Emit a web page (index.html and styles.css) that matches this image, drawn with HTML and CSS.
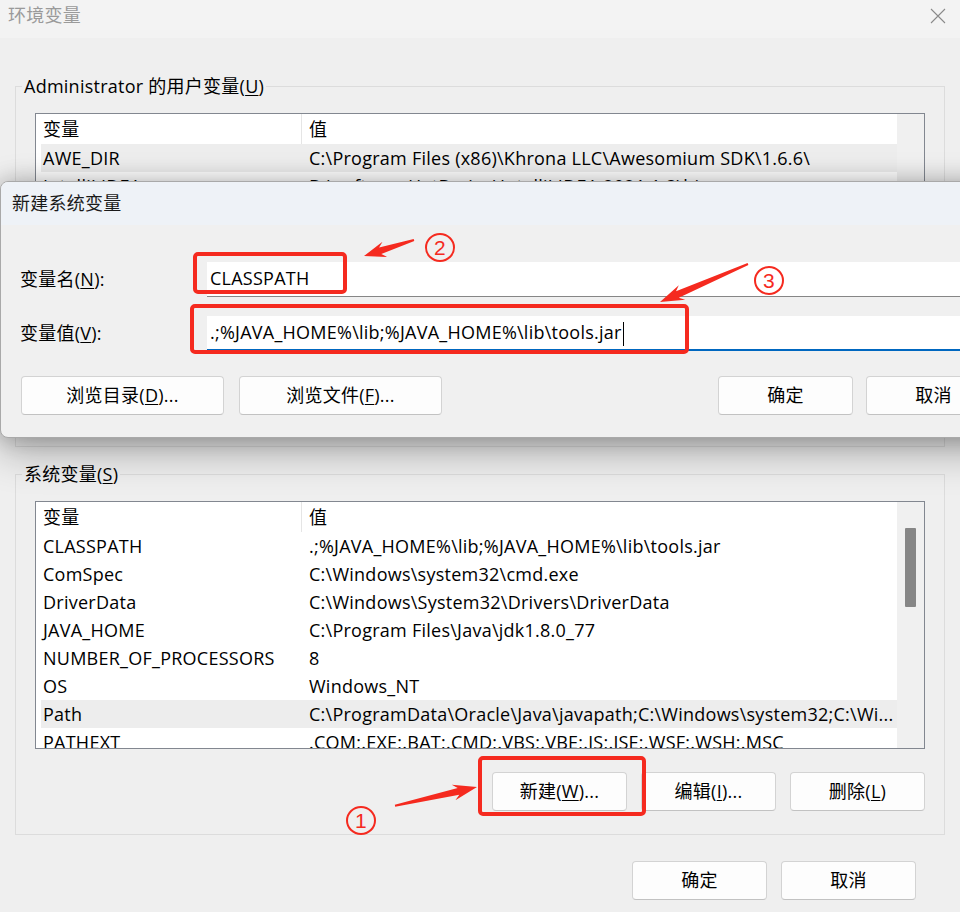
FILE: index.html
```html
<!DOCTYPE html>
<html lang="zh-CN">
<head>
    <meta charset="UTF-8">
    <meta name="viewport" content="width=device-width, initial-scale=1.0">
    <title>环境变量</title>
    <link rel="stylesheet" href="styles.css">
</head>
<body>

    <!-- 环境变量 主窗口 -->
    <div class="titlebar">
        <span class="title">环境变量</span>
        <svg class="close" viewBox="0 0 16 16"><path d="M1 1L15 15M15 1L1 15"/></svg>
    </div>

    <fieldset class="group">
        <legend>Administrator 的用户变量(<u>U</u>)</legend>
        <div class="list">
            <div class="list-body">
                <div class="row head"><span class="c1">变量</span><span class="c2">值</span></div>
                <div class="row sel"><span class="c1">AWE_DIR</span><span class="c2">C:\Program Files (x86)\Khrona LLC\Awesomium SDK\1.6.6\</span></div>
                <div class="row"><span class="c1">IntelliJ IDEA</span><span class="c2">D:\software\JetBrains\IntelliJ IDEA 2021.1.3\bin;</span></div>
                <div class="row"><span class="c1">OneDrive</span><span class="c2">C:\Users\Administrator\OneDrive</span></div>
                <div class="row"><span class="c1">Path</span><span class="c2">C:\Users\Administrator\AppData\Local\Microsoft\WindowsApps;</span></div>
                <div class="row"><span class="c1">TEMP</span><span class="c2">C:\Users\Administrator\AppData\Local\Temp</span></div>
                <div class="row"><span class="c1">TMP</span><span class="c2">C:\Users\Administrator\AppData\Local\Temp</span></div>
            </div>
            <div class="scroll"></div>
        </div>
        <div class="btns">
            <button class="btn">新建(<u>N</u>)...</button>
            <button class="btn">编辑(<u>E</u>)...</button>
            <button class="btn">删除(<u>D</u>)</button>
        </div>
    </fieldset>

    <fieldset class="group sys">
        <legend>系统变量(<u>S</u>)</legend>
        <div class="list">
            <div class="list-body">
                <div class="row head"><span class="c1">变量</span><span class="c2">值</span></div>
                <div class="row"><span class="c1">CLASSPATH</span><span class="c2">.;%JAVA_HOME%\lib;%JAVA_HOME%\lib\tools.jar</span></div>
                <div class="row"><span class="c1">ComSpec</span><span class="c2">C:\Windows\system32\cmd.exe</span></div>
                <div class="row"><span class="c1">DriverData</span><span class="c2">C:\Windows\System32\Drivers\DriverData</span></div>
                <div class="row"><span class="c1">JAVA_HOME</span><span class="c2">C:\Program Files\Java\jdk1.8.0_77</span></div>
                <div class="row"><span class="c1">NUMBER_OF_PROCESSORS</span><span class="c2">8</span></div>
                <div class="row"><span class="c1">OS</span><span class="c2">Windows_NT</span></div>
                <div class="row sel"><span class="c1">Path</span><span class="c2">C:\ProgramData\Oracle\Java\javapath;C:\Windows\system32;C:\Wi...</span></div>
                <div class="row"><span class="c1">PATHEXT</span><span class="c2">.COM;.EXE;.BAT;.CMD;.VBS;.VBE;.JS;.JSE;.WSF;.WSH;.MSC</span></div>
            </div>
            <div class="scroll"><div class="thumb"></div></div>
        </div>
        <div class="btns">
            <button class="btn">新建(<u>W</u>)...</button>
            <button class="btn">编辑(<u>I</u>)...</button>
            <button class="btn">删除(<u>L</u>)</button>
        </div>
    </fieldset>

    <div class="foot">
        <button class="btn">确定</button>
        <button class="btn">取消</button>
    </div>

    <!-- 弹出的 新建系统变量 对话框 -->
    <div class="dlg">
        <div class="dlg-title">新建系统变量</div>
        <div class="dlg-body">
            <div class="field">
                <label>变量名(<u>N</u>):</label>
                <div class="input">CLASSPATH</div>
            </div>
            <div class="field val">
                <label>变量值(<u>V</u>):</label>
                <div class="input focus">.;%JAVA_HOME%\lib;%JAVA_HOME%\lib\tools.jar<span class="caret"></span></div>
            </div>
            <div class="dlg-btns">
                <button class="btn wide">浏览目录(<u>D</u>)...</button>
                <button class="btn wide">浏览文件(<u>F</u>)...</button>
                <span class="spacer"></span>
                <button class="btn">确定</button>
                <button class="btn">取消</button>
            </div>
        </div>
    </div>

    <!-- 标注 -->
    <div class="mark m1"></div>
    <div class="mark m2"></div>
    <div class="mark m3"></div>
    <svg class="arrows" viewBox="0 0 960 912">
        <polygon points="364,256 387.3,256.9 381.3,254.1 414.3,241 413.7,239 379.1,247.5 382.5,241.7"/>
        <polygon points="660,302 685.2,299.8 678.8,297.7 748.4,265 747.6,263 676,291.3 678.8,285.2"/>
        <polygon points="477,787 455.4,800.3 459.3,794.7 395.2,806.7 394.8,804.7 457.7,787.9 451.8,784.7"/>
    </svg>
    <span class="num n1">1</span>
    <span class="num n2">2</span>
    <span class="num n3">3</span>

</body>
</html>
```

FILE: styles.css
```css
/* 环境变量窗口 仿 Win11 对话框 */
* { box-sizing: border-box; }
html, body { margin: 0; }
body { position: relative; width: 960px; height: 912px; overflow: hidden; background: #efefef; color: #000;
       font: 18px/1.2 "Open Sans", "Noto Sans CJK SC", sans-serif; letter-spacing: .25px; }
u { text-decoration-thickness: 1px; text-underline-offset: 2px; }

.titlebar { height: 38px; display: flex; justify-content: space-between; align-items: flex-start; padding: 0 14px 0 8px; background: #f3f3f3; }
.title { line-height: 30px; color: #9a9a9a; }
.close { width: 16px; height: 16px; margin-top: 8px; fill: none; stroke: #8a8a8a; stroke-width: 1.1; }

/* 分组框 */
.group { width: 930px; min-width: 0; margin: 36px 15px 0; padding: 15px 19px 23px; border: 1px solid #dcdcdc; }
.group legend { margin-left: -13px; padding: 0 2px; line-height: 24px; }
.group.sys { margin-top: 15px; }

.list { display: flex; height: 248px; border: 1px solid #828790; background: #fff; }
.list-body { flex: 1; padding-left: 5px; overflow: hidden; }
.row { display: flex; height: 28px; line-height: 28px; white-space: nowrap; }
.row.head { height: 30px; line-height: 30px; }
.row.sel { background: #ededed; }
.c1 { flex: none; width: 261px; padding-left: 2px; }
.c2 { flex: 1; padding-left: 7px; overflow: hidden; }
.head .c1 { border-right: 1px solid #e5e5e5; }
.scroll { flex: none; width: 27px; background: #f0f0f0; padding: 26px 0 0 8px; }
.thumb { width: 11px; height: 79px; background: #868686; border-radius: 1px; }

.btns { display: flex; justify-content: flex-end; gap: 14px; margin-top: 23px; }
.btn { width: 135px; height: 39px; padding: 0; font: inherit; letter-spacing: inherit; color: #000; background: #fdfdfd;
       border: 1px solid #d3d3d3; border-bottom-color: #c2c2c2; border-radius: 4px; }
.foot { display: flex; justify-content: flex-end; gap: 14px; margin-top: 26px; padding-right: 44px; }

/* 新建系统变量 */
.dlg { position: absolute; left: 0; top: 181px; width: 1022px; height: 257px; background: #f0f0f0;
       border: 1px solid #a9a9a9; border-radius: 8px; overflow: hidden;
       box-shadow: 0 14px 40px rgba(0,0,0,.3), 0 0 22px rgba(0,0,0,.22); }
.dlg-title { height: 43px; line-height: 42px; padding-left: 11px; background: #eef2f7; color: #1a1a1a; }
.dlg-body { padding: 37px 20px 0 0; }
.field { display: flex; align-items: center; height: 35px; }
.field.val { margin-top: 19px; }
.field label { width: 206px; padding-left: 19px; }
.input { flex: 1; height: 35px; line-height: 32px; padding-left: 3px; background: #fff; border-bottom: 1px solid #868686; margin-right: -20px; }
.input.focus { border-bottom: 2px solid #0067c0; }
.caret { display: inline-block; width: 1px; height: 24px; margin-left: 1px; background: #000; vertical-align: middle; }
.dlg-btns { display: flex; gap: 15px; margin-top: 25px; padding-left: 20px; }
.btn.wide { width: 203px; }
.spacer { flex: 1; }
.dlg-btns .btn:last-child { margin-left: -2px; }

/* 红色标注 */
.mark { position: absolute; border: 4px solid #f52a1f; border-radius: 5px; }
.m1 { left: 478px; top: 756px; width: 168px; height: 60px; }
.m2 { left: 193px; top: 252px; width: 154px; height: 42px; }
.m3 { left: 190px; top: 304px; width: 499px; height: 50px; }
.arrows { position: absolute; left: 0; top: 0; width: 960px; height: 912px; fill: #f52a1f; }
.num { position: absolute; width: 30px; height: 29px; border: 2px solid #f52a1f; border-radius: 50%;
       color: #f52a1f; font: 21px/25px "Liberation Sans", sans-serif; text-align: center; }
.n1 { left: 346px; top: 806px; }
.n2 { left: 425px; top: 233px; }
.n3 { left: 754px; top: 266px; }
```
